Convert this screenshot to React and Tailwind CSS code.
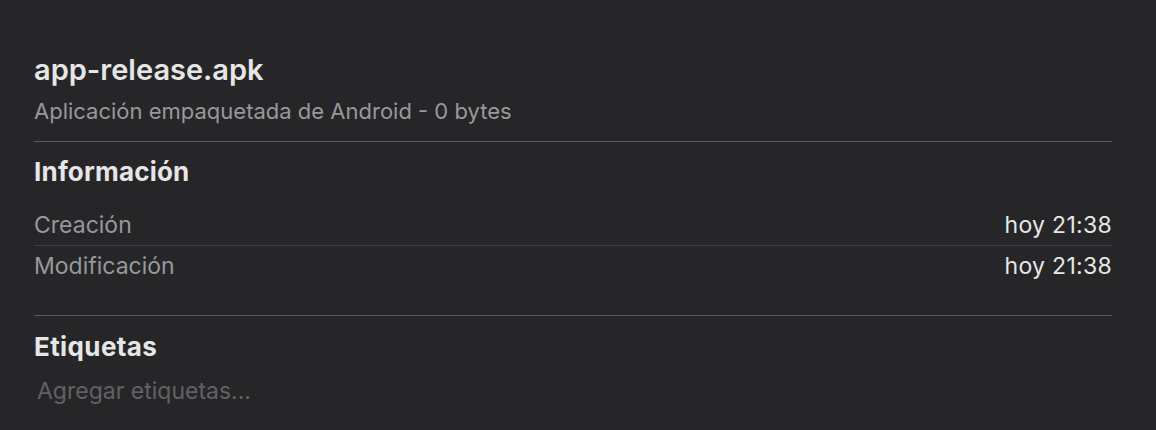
export default function App() {
  const rows = [
    { label: "Creación", value: "hoy 21:38" },
    { label: "Modificación", value: "hoy 21:38" },
  ];

  return (
    <div className="h-[430px] w-[1156px] bg-[#262629] pl-[34px] pr-[44px] pt-[52px] font-['Inter',sans-serif]">
      <h1 className="text-[29px] font-semibold leading-[36px] text-[#e6e6e6]">app-release.apk</h1>
      <p className="mt-[9px] text-[22px] leading-[28px] text-[#98989b]">
        Aplicación empaquetada de Android - 0 bytes
      </p>

      <div className="mt-[16px] border-t border-[#5a5a5d]" />

      <h2 className="mt-[14px] text-[26px] font-bold leading-[32px] tracking-[0.2px] text-[#e6e6e6]">
        Información
      </h2>
      <dl className="mt-[17px]">
        {rows.map((row, i) => (
          <div
            key={row.label}
            className={
              "flex items-center justify-between text-[23px] leading-[40px] " +
              (i === 0 ? "border-b border-[#3d3d40]" : "")
            }
          >
            <dt className="text-[#98989b]">{row.label}</dt>
            <dd className="tracking-[0.3px] text-[#e6e6e6]">{row.value}</dd>
          </div>
        ))}
      </dl>

      <div className="mt-[29px] border-t border-[#5a5a5d]" />

      <h2 className="mt-[15px] text-[26px] font-bold leading-[32px] tracking-[0.4px] text-[#e6e6e6]">
        Etiquetas
      </h2>
      <p className="mt-[14px] pl-[3px] text-[23px] leading-[28px] text-[#626265]">Agregar etiquetas...</p>
    </div>
  );
}
